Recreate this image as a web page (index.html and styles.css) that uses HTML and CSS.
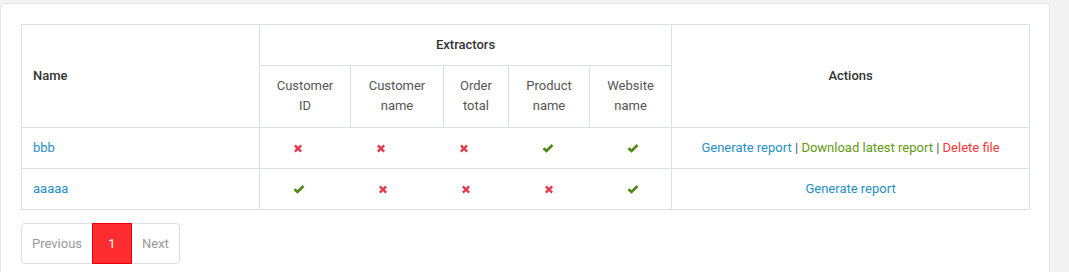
FILE: index.html
```html
<!DOCTYPE html>
<html lang="en">
<head>
  <meta charset="UTF-8" />
  <title>Reports</title>
  <link rel="stylesheet" href="styles.css">
</head>
<body>
  <div class="panel">
    <table class="report-table">
      <colgroup>
        <col style="width:238px">
        <col style="width:91px">
        <col style="width:93px">
        <col style="width:65px">
        <col style="width:81px">
        <col style="width:82px">
        <col style="width:358px">
      </colgroup>
      <thead>
        <tr>
          <th rowspan="2" class="name-col">Name</th>
          <th colspan="5">Extractors</th>
          <th rowspan="2">Actions</th>
        </tr>
        <tr class="sub-head">
          <th>Customer ID</th>
          <th>Customer name</th>
          <th>Order total</th>
          <th>Product name</th>
          <th>Website name</th>
        </tr>
      </thead>
      <tbody>
        <tr>
          <td class="name-col"><a href="#" class="link">bbb</a></td>
          <td colspan="5">
            <div class="status-row">
              <svg class="ico ico-no" viewBox="0 0 10 10"><path d="M1.5 1.5L8.5 8.5M8.5 1.5L1.5 8.5"/></svg>
              <svg class="ico ico-no" viewBox="0 0 10 10"><path d="M1.5 1.5L8.5 8.5M8.5 1.5L1.5 8.5"/></svg>
              <svg class="ico ico-no" viewBox="0 0 10 10"><path d="M1.5 1.5L8.5 8.5M8.5 1.5L1.5 8.5"/></svg>
              <svg class="ico ico-yes" viewBox="0 0 12 10"><path d="M1.5 5.2L4.5 8L10.5 2"/></svg>
              <svg class="ico ico-yes" viewBox="0 0 12 10"><path d="M1.5 5.2L4.5 8L10.5 2"/></svg>
            </div>
          </td>
          <td class="actions">
            <a href="#" class="link">Generate report</a> <span class="sep">|</span>
            <a href="#" class="link-ok">Download latest report</a> <span class="sep">|</span>
            <a href="#" class="link-del">Delete file</a>
          </td>
        </tr>
        <tr>
          <td class="name-col"><a href="#" class="link">aaaaa</a></td>
          <td colspan="5">
            <div class="status-row">
              <svg class="ico ico-yes" viewBox="0 0 12 10"><path d="M1.5 5.2L4.5 8L10.5 2"/></svg>
              <svg class="ico ico-no" viewBox="0 0 10 10"><path d="M1.5 1.5L8.5 8.5M8.5 1.5L1.5 8.5"/></svg>
              <svg class="ico ico-no" viewBox="0 0 10 10"><path d="M1.5 1.5L8.5 8.5M8.5 1.5L1.5 8.5"/></svg>
              <svg class="ico ico-no" viewBox="0 0 10 10"><path d="M1.5 1.5L8.5 8.5M8.5 1.5L1.5 8.5"/></svg>
              <svg class="ico ico-yes" viewBox="0 0 12 10"><path d="M1.5 5.2L4.5 8L10.5 2"/></svg>
            </div>
          </td>
          <td class="actions"><a href="#" class="link">Generate report</a></td>
        </tr>
      </tbody>
    </table>

    <ul class="pager">
      <li class="page-item prev">Previous</li>
      <li class="page-item current">1</li>
      <li class="page-item next">Next</li>
    </ul>
  </div>
</body>
</html>
```

FILE: styles.css
```css
/* base */
* {
  box-sizing: border-box;
}
body {
  margin: 0;
  background-color: #f3f3f3;
  font-family: Roboto, "Liberation Sans", sans-serif;
  font-size: 13px;
  line-height: 20px;
  color: #333;
}

/* card */
.panel {
  width: 1050px;
  margin-top: 3px;
  padding: 20px;
  background-color: #fff;
  border: 1px solid #e4e4e4;
  border-radius: 4px;
}

/* table */
.report-table {
  width: 1008px;
  border-collapse: collapse;
  table-layout: fixed;
}
.report-table th,
.report-table td {
  border: 1px solid #dde0e5;
  padding: 10px 10px;
  text-align: center;
  vertical-align: middle;
}
.report-table th {
  font-weight: 500;
  color: #333;
}
.report-table .name-col {
  text-align: left;
  padding-left: 11px;
}
.sub-head th {
  font-weight: 400;
  color: #555;
  padding: 10px 12px 11px;
}

/* status icons, one per extractor */
.status-row {
  display: flex;
  justify-content: center;
  align-items: center;
  gap: 73px;
  height: 20px;
}
.ico {
  display: block;
  fill: none;
  stroke-linecap: butt;
}
.ico-no {
  width: 10px;
  height: 9px;
  stroke: #e53a4c;
  stroke-width: 2.6;
}
.ico-yes {
  width: 12px;
  height: 10px;
  stroke: #4f8a10;
  stroke-width: 2.6;
}

/* links */
a {
  text-decoration: none;
}
.link {
  color: #1f90c8;
}
.link-ok {
  color: #5f9a12;
}
.link-del {
  color: #ff3535;
}
.sep {
  color: #555;
}

/* pagination */
.pager {
  display: flex;
  list-style: none;
  margin: 13px 0 0;
  padding: 0;
}
.page-item {
  height: 41px;
  line-height: 39px;
  padding: 0 10px;
  border: 1px solid #dde0e5;
  color: #999;
}
.page-item.prev {
  width: 71px;
  border-radius: 4px 0 0 4px;
  border-right: none;
}
.page-item.current {
  width: 40px;
  text-align: center;
  background-color: #ff2d30;
  border-color: #e00;
  color: #fff;
}
.page-item.next {
  width: 48px;
  border-left: none;
  border-radius: 0 4px 4px 0;
}
```
